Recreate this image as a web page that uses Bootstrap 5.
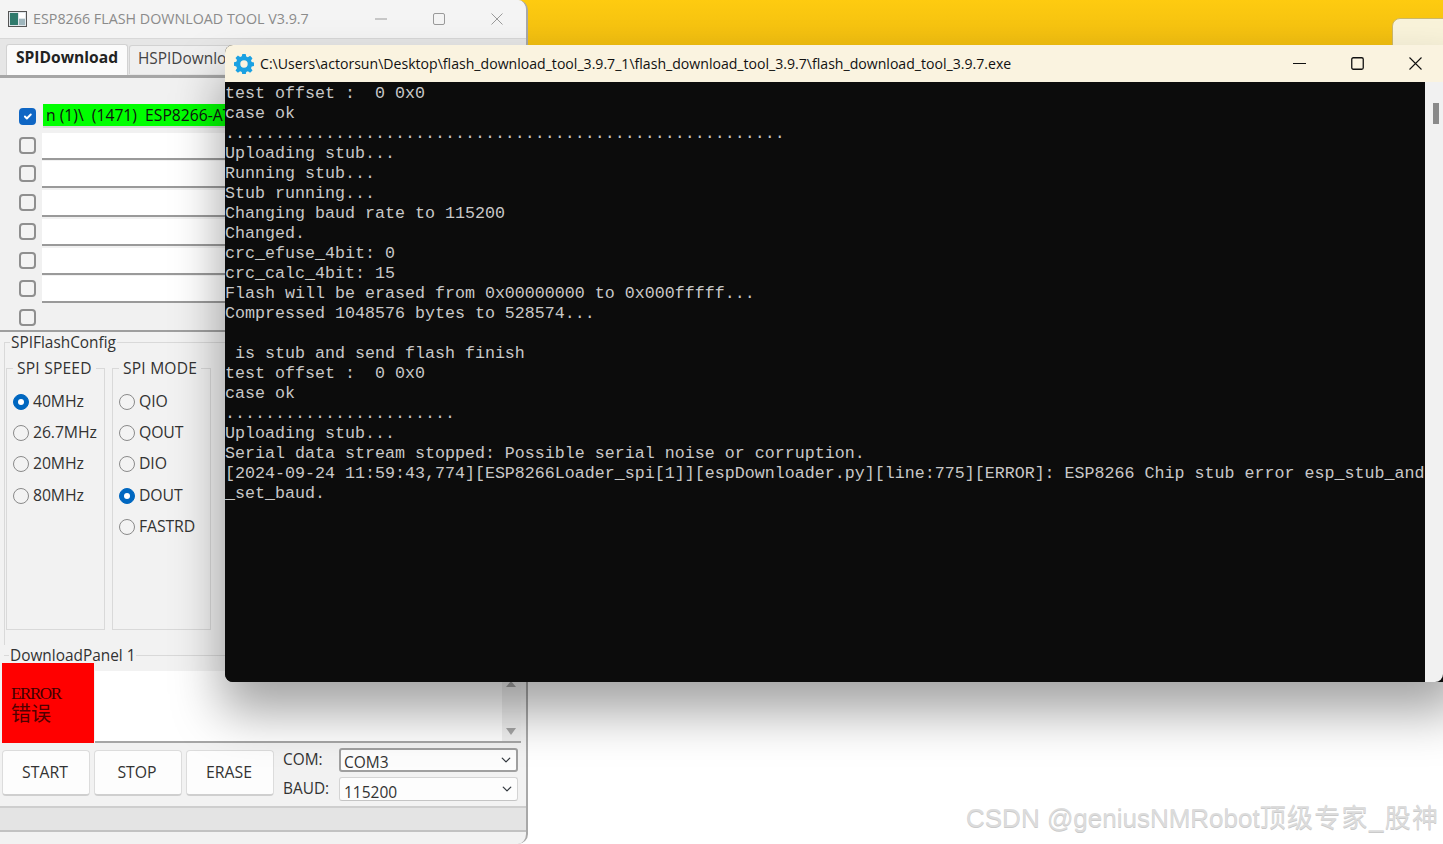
<!DOCTYPE html>
<html lang="zh"><head><meta charset="utf-8"><title>ESP8266 Flash Download Tool</title>
<link href="https://cdn.jsdelivr.net/npm/bootstrap@5.3.0/dist/css/bootstrap.min.css" rel="stylesheet">
<style>
html,body{margin:0;height:100%;overflow:hidden;background:#fff}
.desk{position:relative;width:1443px;height:844px;overflow:hidden;background:#fff;font-family:"Open Sans","Noto Sans",sans-serif}
.wall{position:absolute;left:0;top:0;width:1443px;height:46px;background:linear-gradient(#fecb10,#f0bd10)}
.paper{position:absolute;left:1392px;top:18px;width:60px;height:40px;background:#f9f3da;border:1px solid #cbb76a;border-radius:8px 0 0 0}
.flashwin{position:absolute;left:0;top:0;width:528px;height:844px;background:#f2f2f2;border-right:2px solid #a8a8a8;border-radius:0 10px 10px 0;overflow:hidden;display:flex;flex-direction:column;color:#333;font-size:15.8px}
.wtitle{height:38px;flex:none;padding:0 0 1px 8px;gap:6px;color:#8b8b8b;font-size:14.3px;background:#f4f4f4}
.appico{width:19px;height:16px;flex:none}
.wctl{width:58px;text-align:center;flex:none;line-height:0}
.wctlbox{margin-left:auto}
.tabstrip{height:37px;flex:none;background:#e6e6e6;padding:5px 0 0 6px;gap:1px;border-top:1px solid #d8d8d8;margin:0;list-style:none;border-bottom:0}
.tabitem{height:32px;width:122px;background:#fbfbfb;border:1px solid #d2d2d2;border-bottom:0;border-radius:3px 3px 0 0;text-align:center;font-weight:700;font-size:15.6px;color:#222;line-height:22px;padding-top:1px}
.tabitem.other{width:160px;font-weight:400;background:#efefef;color:#444;margin-top:1px;height:29px;text-align:left;padding-left:8px;line-height:24px;font-size:15.4px}
.filelist{height:257px;flex:none;border-top:3px solid #a6a6a6;border-bottom:2px solid #9f9f9f;padding:24px 0 0 19px;background:#f1f1f1}
.filerow{height:28.75px;gap:6px;flex:none}
.pick.form-check-input{width:17px;height:17px;margin:0;flex:none;background-color:#f3f3f3;border:2px solid #8f8f8f;border-radius:4px}
.pick.form-check-input:checked{background-color:#0f66c4;border-color:#0f66c4}
.pathbox{height:27px;width:240px;background:#fff;border-bottom:2px solid #9a9a9a;flex:none;margin-top:2px}
.pathbox.hit{height:24px;background:#00ff00;color:#111;font-size:15.7px;line-height:23px;white-space:pre;overflow:hidden;border-bottom:2px solid #d6d6d6;margin:0 0 0 1px;width:280px;padding-left:3px}
.cfgarea{height:313px;flex:none;padding:0 4px;position:relative}
.grouptop{border:0;border-top:1px solid #d9d9d9;border-left:1px solid #d9d9d9;margin:0;padding:0;height:100%}
.grouptop legend{float:none;width:auto;margin:0 0 0 5px;padding:0 1px;font-size:15.4px;line-height:21px;color:#333}
.groupcols{gap:7px;padding-left:1px;margin-top:4px}
.groupbox{width:99px;height:273px;border:1px solid #d9d9d9;margin:0;padding:0;flex:none}
.groupbox legend{float:none;width:auto;margin:0 0 0 6px;padding:0 4px;font-size:15.6px;line-height:22px;color:#333;letter-spacing:.2px}
.radios{padding:7px 0 0 6px}
.radrow{height:31.3px;gap:4px;margin:0;padding:0;min-height:0;font-size:15.8px;color:#333;letter-spacing:-.1px}
.radrow .form-check-input{float:none;margin:0;width:16px;height:16px;flex:none;background-color:#f3f3f3;border:1.5px solid #8a8a8a}
.radrow .form-check-input:checked{background-color:#0067c0;border-color:#0067c0;background-size:12px}
.dlarea{flex:1;padding:0 0 0 2px;position:relative;min-height:0}
.dlgroup{border:0;margin:0 0 0 2px;padding:0;border-top:1px solid #d9d9d9;height:20px}
.dlgroup legend{float:none;width:auto;margin:0 0 0 5px;padding:0 1px;font-size:15.4px;line-height:21px;color:#333}
.dlview{height:80px;gap:1px;margin-top:-3px;margin-right:5px}
.errbox{width:92px;height:80px;background:#ff0000;flex:none;color:#400000;font-family:"Liberation Serif","Noto Sans CJK SC",serif;font-size:17px;line-height:20px;padding:21px 0 0 9px;letter-spacing:-1.4px}
.errbox span{display:block;font-size:20px;letter-spacing:0;color:#500000}
.logbox{flex:1;margin-top:8px;height:72px;background:#fff;border-bottom:2px solid #a6a6a6;display:flex;justify-content:flex-end}
.scrolly{width:19px;background:#f0f0f0;position:relative}
.tri{position:absolute;left:4px;width:0;height:0;border-left:5px solid transparent;border-right:5px solid transparent}
.tri.up{top:10px;border-bottom:6px solid #a5a5a5}
.tri.dn{bottom:6px;border-top:7px solid #a5a5a5}
.ctlrow{height:58px;padding-top:7px;gap:4px}
.toolbtn.btn{width:88px;height:46px;padding:1px 2px 0 0;background:#fdfdfd;border:1px solid #dcdcdc;border-bottom:2px solid #cfcfcf;border-radius:4px;color:#333;font-size:15.8px;flex:none}
.comgrid{margin-left:5px;width:235px;margin-top:-2px}
.comline{height:29px;gap:0;align-items:flex-start}
.comline label{width:56px;flex:none;font-size:15.4px;color:#333;line-height:24px}
.comsel.form-select{width:179px;height:24px;padding:5px 4px 0;border-radius:3px;font-size:15.5px;line-height:18px;color:#333;background-color:#fdfdfd;border:1px solid #d4d4d4;border-bottom:1px solid #c4c4c4;background-position:right 3px center;background-size:14px 10px}
.comsel.active-sel{border:2px solid #a0a0a0;padding:3px 3px 0}
.statusbar{height:26px;flex:none;margin:0;background:#e4e4e4;border-top:2px solid #cecece;border-bottom:2px solid #c2c2c2}
.winfoot{height:12px;flex:none}
.conwin{position:absolute;left:225px;top:45px;width:1230px;height:637px;background:#0c0c0c;border-radius:8px;overflow:hidden;display:flex;flex-direction:column}
.conshadow{position:absolute;left:225px;top:45px;width:1240px;height:637px;border-radius:8px;box-shadow:-3px 30px 50px rgba(0,0,0,.36)}
.contitle{height:37px;flex:none;background:#faf3e0;padding-left:9px;font-size:14.1px;color:#111;gap:6px}
.conctl{width:58px;text-align:center;flex:none;line-height:0}
.conctls{margin-right:11px}
.conbody{flex:1;min-height:0;display:flex}
.conlog{width:1200px;margin:0;padding:2px 0 0 0;background:#0c0c0c;color:#c8c8c8;font-family:"Liberation Mono",monospace;font-size:16.667px;line-height:20px;white-space:pre;overflow:hidden}
.conscroll{width:18px;flex:none;background:#f1f1f1;position:relative;border-radius:0 0 8px 0}
.conthumb{position:absolute;left:8px;top:21px;width:6px;height:21px;background:#8a8a8a}
.mark-w{position:absolute;left:966px;top:799px;font-family:"Liberation Sans","Noto Sans CJK SC",sans-serif;font-size:26px;line-height:38px;color:#dcdcdc;white-space:nowrap;text-shadow:0 1px 0 #cacaca}
.mark-w span{letter-spacing:1.3px}
</style></head>
<body>
<div class="desk">
  <div class="wall"></div>
  <div class="paper"></div>

  <section class="flashwin">
    <div class="wtitle d-flex align-items-center">
      <svg class="appico" viewBox="0 0 19 16"><rect x=".5" y=".5" width="18" height="15" fill="#dfe6ea" stroke="#555"/><rect x="2" y="2" width="8" height="12" fill="#2f7a6c"/><rect x="11" y="2" width="6" height="5" fill="#fff"/><rect x="11" y="8" width="6" height="6" fill="#9fb6bd"/></svg>
      <span>ESP8266 FLASH DOWNLOAD TOOL V3.9.7</span>
      <div class="wctlbox d-flex">
        <div class="wctl"><svg width="12" height="12" viewBox="0 0 12 12"><path d="M0 6h12" stroke="#9a9a9a"/></svg></div>
        <div class="wctl"><svg width="12" height="12" viewBox="0 0 12 12"><rect x=".5" y=".5" width="11" height="11" rx="1.5" fill="none" stroke="#9a9a9a"/></svg></div>
        <div class="wctl"><svg width="12" height="12" viewBox="0 0 12 12"><path d="M.5.5l11 11M11.500.5l-11 11" stroke="#9a9a9a"/></svg></div>
      </div>
    </div>
    <ul class="tabstrip d-flex">
      <li class="tabitem">SPIDownload</li>
      <li class="tabitem other">HSPIDownload</li>
    </ul>
    <div class="filelist d-flex flex-column">
      <div class="filerow d-flex align-items-center"><input class="form-check-input pick" type="checkbox" checked aria-label="row 1"><div class="pathbox hit">n (1)\  (1471)  ESP8266-AT</div></div>
      <div class="filerow d-flex align-items-center"><input class="form-check-input pick" type="checkbox" aria-label="row 2"><div class="pathbox"></div></div>
      <div class="filerow d-flex align-items-center"><input class="form-check-input pick" type="checkbox" aria-label="row 3"><div class="pathbox"></div></div>
      <div class="filerow d-flex align-items-center"><input class="form-check-input pick" type="checkbox" aria-label="row 4"><div class="pathbox"></div></div>
      <div class="filerow d-flex align-items-center"><input class="form-check-input pick" type="checkbox" aria-label="row 5"><div class="pathbox"></div></div>
      <div class="filerow d-flex align-items-center"><input class="form-check-input pick" type="checkbox" aria-label="row 6"><div class="pathbox"></div></div>
      <div class="filerow d-flex align-items-center"><input class="form-check-input pick" type="checkbox" aria-label="row 7"><div class="pathbox"></div></div>
      <div class="filerow d-flex align-items-center"><input class="form-check-input pick" type="checkbox" aria-label="row 8"></div>
    </div>
    <div class="cfgarea">
      <fieldset class="grouptop">
        <legend>SPIFlashConfig</legend>
        <div class="groupcols d-flex">
          <fieldset class="groupbox">
            <legend>SPI SPEED</legend>
            <div class="radios">
              <label class="radrow form-check d-flex align-items-center"><input class="form-check-input" type="radio" name="sp" checked>40MHz</label>
              <label class="radrow form-check d-flex align-items-center"><input class="form-check-input" type="radio" name="sp">26.7MHz</label>
              <label class="radrow form-check d-flex align-items-center"><input class="form-check-input" type="radio" name="sp">20MHz</label>
              <label class="radrow form-check d-flex align-items-center"><input class="form-check-input" type="radio" name="sp">80MHz</label>
            </div>
          </fieldset>
          <fieldset class="groupbox">
            <legend>SPI MODE</legend>
            <div class="radios">
              <label class="radrow form-check d-flex align-items-center"><input class="form-check-input" type="radio" name="md">QIO</label>
              <label class="radrow form-check d-flex align-items-center"><input class="form-check-input" type="radio" name="md">QOUT</label>
              <label class="radrow form-check d-flex align-items-center"><input class="form-check-input" type="radio" name="md">DIO</label>
              <label class="radrow form-check d-flex align-items-center"><input class="form-check-input" type="radio" name="md" checked>DOUT</label>
              <label class="radrow form-check d-flex align-items-center"><input class="form-check-input" type="radio" name="md">FASTRD</label>
            </div>
          </fieldset>
        </div>
      </fieldset>
    </div>
    <div class="dlarea">
      <fieldset class="dlgroup"><legend>DownloadPanel 1</legend></fieldset>
      <div class="dlview d-flex">
        <div class="errbox">ERROR<span>错误</span></div>
        <div class="logbox"><div class="scrolly"><i class="tri up"></i><i class="tri dn"></i></div></div>
      </div>
      <div class="ctlrow d-flex">
        <button class="btn toolbtn" type="button">START</button>
        <button class="btn toolbtn" type="button">STOP</button>
        <button class="btn toolbtn" type="button">ERASE</button>
        <div class="comgrid">
          <div class="comline d-flex"><label>COM:</label><select class="form-select comsel active-sel" aria-label="COM"><option>COM3</option></select></div>
          <div class="comline d-flex"><label>BAUD:</label><select class="form-select comsel" aria-label="BAUD"><option>115200</option></select></div>
        </div>
      </div>
    </div>
    <div class="statusbar"></div>
    <div class="winfoot"></div>
  </section>

  <div class="conshadow"></div>
  <section class="conwin">
    <div class="contitle d-flex align-items-center">
      <svg width="20" height="20" viewBox="0 0 20 20"><path fill="#1ba1e2" fill-rule="evenodd" d="M8.300 0h3.400l.5 2.600 1.700.7 2.200-1.500 2.400 2.400-1.500 2.200.7 1.700 2.600.5v3.400l-2.600.5-.7 1.700 1.500 2.200-2.400 2.400-2.200-1.500-1.700.7-.5 2.600H8.300l-.5-2.600-1.700-.7-2.200 1.500-2.400-2.400 1.500-2.200-.7-1.700L-.300 11.700V8.300l2.600-.5.700-1.700L1.500 3.900l2.400-2.400 2.200 1.500 1.700-.7zM10 6.300a3.700 3.700 0 1 0 0 7.400 3.700 3.700 0 0 0 0-7.400z"/></svg>
      <span class="me-auto">C:\Users\actorsun\Desktop\flash_download_tool_3.9.7_1\flash_download_tool_3.9.7\flash_download_tool_3.9.7.exe</span>
      <div class="d-flex conctls">
        <div class="conctl"><svg width="13" height="13" viewBox="0 0 13 13"><path d="M0 6.500h13" stroke="#111"/></svg></div>
        <div class="conctl"><svg width="13" height="13" viewBox="0 0 13 13"><rect x=".75" y=".75" width="11.500" height="11.500" rx="1.500" fill="none" stroke="#111" stroke-width="1.300"/></svg></div>
        <div class="conctl"><svg width="13" height="13" viewBox="0 0 13 13"><path d="M.5.5l12 12M12.500.5l-12 12" stroke="#111" stroke-width="1.100"/></svg></div>
      </div>
    </div>
    <div class="conbody">
<pre class="conlog">test offset :  0 0x0
case ok
........................................................
Uploading stub...
Running stub...
Stub running...
Changing baud rate to 115200
Changed.
crc_efuse_4bit: 0
crc_calc_4bit: 15
Flash will be erased from 0x00000000 to 0x000fffff...
Compressed 1048576 bytes to 528574...

 is stub and send flash finish
test offset :  0 0x0
case ok
.......................
Uploading stub...
Serial data stream stopped: Possible serial noise or corruption.
[2024-09-24 11:59:43,774][ESP8266Loader_spi[1]][espDownloader.py][line:775][ERROR]: ESP8266 Chip stub error esp_stub_and
_set_baud.</pre>
      <div class="conscroll"><div class="conthumb"></div></div>
    </div>
  </section>

  <div class="mark-w">CSDN @geniusNMRobot<span>顶级专家_股神</span></div>
</div>
<script src="https://cdn.jsdelivr.net/npm/bootstrap@5.3.0/dist/js/bootstrap.bundle.min.js"></script>
</body></html>
